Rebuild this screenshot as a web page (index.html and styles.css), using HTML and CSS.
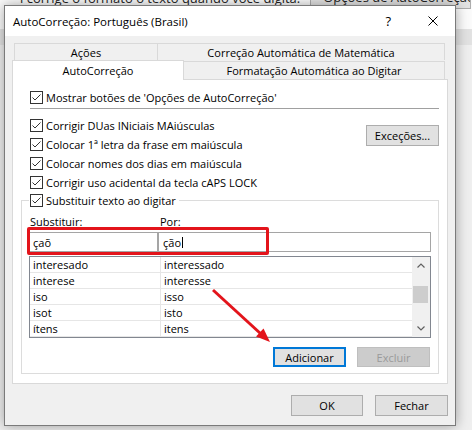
FILE: index.html
```html
<!DOCTYPE html>
<html lang="pt-BR">
<head>
    <meta charset="UTF-8">
    <meta name="viewport" content="width=device-width, initial-scale=1.0">
    <title>AutoCorreção: Português (Brasil)</title>
    <link rel="stylesheet" href="styles.css">
</head>
<body>
    <!-- window behind the dialog, only its edges show -->
    <div class="backwin">
        <span class="backwin-text">ı corrige o formato o texto quando você digita:</span>
        <span class="backwin-btn">Opções de AutoCorreção...</span>
    </div>

    <div class="dialog">
        <div class="titlebar">
            <span class="title">AutoCorreção: Português (Brasil)</span>
            <span class="help">?</span>
            <svg class="close" width="10" height="10" viewBox="0 0 10 10">
                <path d="M0.5 0.5 L9.5 9.5 M9.5 0.5 L0.5 9.5" stroke="#000" stroke-width="1" fill="none"/>
            </svg>
        </div>

        <div class="dialog-body">
            <div class="tabs">
                <div class="tab-row tab-row-back">
                    <div class="tab tab-acoes">Ações</div>
                    <div class="tab tab-math">Correção Automática de Matemática</div>
                </div>
                <div class="tab-row tab-row-front">
                    <div class="tab tab-auto">AutoCorreção</div>
                    <div class="tab tab-format">Formatação Automática ao Digitar</div>
                </div>
            </div>

            <div class="panel">
                <label class="check indent">
                    <svg class="box" width="13" height="13" viewBox="0 0 13 13"><rect x="0.5" y="0.5" width="12" height="12" fill="#fff" stroke="#333"/><polyline points="2.5,6.5 5,9 10.5,3.5" fill="none" stroke="#333"/></svg>
                    Mostrar botões de 'Opções de AutoCorreção'
                </label>
                <div class="sep"></div>

                <div class="opts">
                    <div class="opts-list">
                        <label class="check">
                            <svg class="box" width="13" height="13" viewBox="0 0 13 13"><rect x="0.5" y="0.5" width="12" height="12" fill="#fff" stroke="#333"/><polyline points="2.5,6.5 5,9 10.5,3.5" fill="none" stroke="#333"/></svg>
                            Corrigir DUas INiciais MAiúsculas
                        </label>
                        <label class="check">
                            <svg class="box" width="13" height="13" viewBox="0 0 13 13"><rect x="0.5" y="0.5" width="12" height="12" fill="#fff" stroke="#333"/><polyline points="2.5,6.5 5,9 10.5,3.5" fill="none" stroke="#333"/></svg>
                            Colocar 1ª letra da frase em maiúscula
                        </label>
                        <label class="check">
                            <svg class="box" width="13" height="13" viewBox="0 0 13 13"><rect x="0.5" y="0.5" width="12" height="12" fill="#fff" stroke="#333"/><polyline points="2.5,6.5 5,9 10.5,3.5" fill="none" stroke="#333"/></svg>
                            Colocar nomes dos dias em maiúscula
                        </label>
                        <label class="check">
                            <svg class="box" width="13" height="13" viewBox="0 0 13 13"><rect x="0.5" y="0.5" width="12" height="12" fill="#fff" stroke="#333"/><polyline points="2.5,6.5 5,9 10.5,3.5" fill="none" stroke="#333"/></svg>
                            Corrigir uso acidental da tecla cAPS LOCK
                        </label>
                    </div>
                    <button class="btn btn-exc">Exceções...</button>
                </div>

                <fieldset class="group">
                    <legend class="group-title">
                        <label class="check">
                            <svg class="box" width="13" height="13" viewBox="0 0 13 13"><rect x="0.5" y="0.5" width="12" height="12" fill="#fff" stroke="#333"/><polyline points="2.5,6.5 5,9 10.5,3.5" fill="none" stroke="#333"/></svg>
                            Substituir texto ao digitar
                        </label>
                    </legend>

                    <div class="field-labels">
                        <span class="lbl-from">Substituir:</span>
                        <span class="lbl-to">Por:</span>
                    </div>
                    <div class="inputs">
                        <div class="input input-from">çaõ</div>
                        <div class="input input-to">ção<span class="caret"></span></div>
                    </div>

                    <div class="list">
                        <div class="list-rows">
                            <div class="list-row"><span class="cell-from">interesado</span><span class="cell-to">interessado</span></div>
                            <div class="list-row"><span class="cell-from">interese</span><span class="cell-to">interesse</span></div>
                            <div class="list-row"><span class="cell-from">iso</span><span class="cell-to">isso</span></div>
                            <div class="list-row"><span class="cell-from">isot</span><span class="cell-to">isto</span></div>
                            <div class="list-row"><span class="cell-from">ítens</span><span class="cell-to">itens</span></div>
                        </div>
                        <div class="scrollbar">
                            <div class="sb-btn">
                                <svg width="8" height="5" viewBox="0 0 8 5"><polyline points="0.5,4.5 4,1 7.5,4.5" fill="none" stroke="#606060" stroke-width="1.2"/></svg>
                            </div>
                            <div class="sb-track"><div class="sb-thumb"></div></div>
                            <div class="sb-btn">
                                <svg width="8" height="5" viewBox="0 0 8 5"><polyline points="0.5,0.5 4,4 7.5,0.5" fill="none" stroke="#606060" stroke-width="1.2"/></svg>
                            </div>
                        </div>
                    </div>

                    <div class="group-buttons">
                        <button class="btn btn-default">Adicionar</button>
                        <button class="btn btn-disabled">Excluir</button>
                    </div>
                </fieldset>
            </div>

            <div class="footer">
                <button class="btn btn-ok">OK</button>
                <button class="btn btn-close">Fechar</button>
            </div>
        </div>
    </div>

    <!-- red markup drawn over the dialog -->
    <div class="mark-box"></div>
    <svg class="mark-arrow" width="72" height="66" viewBox="0 0 72 66">
        <line x1="8" y1="7" x2="56" y2="51" stroke="#e3141b" stroke-width="3"/>
        <polygon points="65,59 51,53.5 58.5,45.5" fill="#e3141b"/>
    </svg>
</body>
</html>
```

FILE: styles.css
```css
* {
    box-sizing: border-box;
}
body {
    position: relative;
    width: 472px;
    height: 430px;
    margin: 0;
    overflow: hidden;
    font-family: "Open Sans", "Noto Sans", sans-serif;
    font-size: 11px;
    color: #000;
    background-color: #efefef;
}

/* window underneath */
.backwin {
    display: flex;
    height: 45px;
    padding-left: 20px;
    background-color: #fbfbfb;
    border-bottom: 16px solid #e2e2e2;
    white-space: nowrap;
}
.backwin-text {
    margin-top: -10px;
    font-size: 13px;
    line-height: 16px;
    color: #222;
}
.backwin-btn {
    flex: none;
    margin: -12px 0 0 10px;
    width: 161px;
    height: 21px;
    padding-left: 12px;
    overflow: hidden;
    font-size: 13px;
    line-height: 16px;
    color: #222;
    background-color: #e3e3e3;
    border: 1px solid #adadad;
}

/* dialog window */
.dialog {
    position: absolute;
    left: 4px;
    top: 5px;
    width: 452px;
    border: 1px solid #7a7a7a;
    background-color: #f0f0f0;
    box-shadow: 0 0 12px rgba(0, 0, 0, 0.35);
}
.titlebar {
    display: flex;
    align-items: center;
    height: 30px;
    padding-left: 8px;
    background-color: #fff;
}
.title {
    flex: 1;
    font-size: 11.5px;
}
.help {
    margin-right: 37px;
    font-size: 13px;
}
.close {
    margin-right: 17px;
}
.dialog-body {
    padding: 7px 7px 9px 7px;
}

/* tabs */
.tab-row {
    display: flex;
}
.tab {
    display: flex;
    align-items: center;
    justify-content: center;
    border: 1px solid #d9d9d9;
    border-bottom: none;
    background-color: #f0f0f0;
}
.tab + .tab {
    margin-left: -1px;
}
.tab-row-back {
    height: 17px;
    margin-left: 2px;
}
.tab-acoes {
    width: 144px;
}
.tab-math {
    width: 288px;
}
.tab-row-front {
    height: 19px;
    align-items: flex-end;
}
.tab-auto {
    position: relative;
    z-index: 1;
    width: 172px;
    height: 20px;
    margin-bottom: -1px;
    background-color: #fff;
}
.tab-format {
    width: 262px;
    height: 18px;
}

/* tab page */
.panel {
    padding: 8px 8px 9px 8px;
    border: 1px solid #d9d9d9;
    background-color: #fff;
}
.check {
    display: flex;
    align-items: center;
    gap: 3px;
    height: 19px;
    white-space: nowrap;
}
.indent {
    margin-left: 9px;
}
.sep {
    height: 1px;
    margin: 1px 0 7px 9px;
    background-color: #a0a0a0;
}
.opts {
    display: flex;
    justify-content: space-between;
    align-items: flex-start;
}
.opts-list {
    margin-left: 9px;
}

.btn {
    height: 21px;
    padding: 0;
    font-family: inherit;
    font-size: 11px;
    color: #000;
    background-color: #e1e1e1;
    border: 1px solid #adadad;
}
.btn-exc {
    width: 73px;
    margin-top: 9px;
}

/* replace group */
.group {
    min-width: 0;
    margin: -1px 0 0 0;
    padding: 0 7px 6px 7px;
    border: 1px solid #dcdcdc;
}
.group-title {
    padding: 0 3px 0 1px;
}
.field-labels {
    display: flex;
    height: 16px;
    margin-top: 4px;
    line-height: 16px;
}
.lbl-from {
    width: 131px;
    padding-left: 1px;
}
.inputs {
    display: flex;
    height: 20px;
    margin-top: 2px;
}
.input {
    display: flex;
    align-items: center;
    border: 1px solid #a5a5a5;
    background-color: #fff;
}
.input-from {
    width: 129px;
    padding-left: 3px;
}
.input-to {
    flex: 1;
    padding-left: 4px;
}
.caret {
    width: 1px;
    height: 11px;
    margin-left: 1px;
    background-color: #000;
}

.list {
    display: flex;
    height: 82px;
    margin-top: 4px;
    border: 1px solid #828790;
    background-color: #fff;
}
.list-rows {
    flex: 1;
}
.list-row {
    display: flex;
    height: 16px;
    border-bottom: 1px solid #e6e6e6;
    line-height: 15px;
}
.cell-from {
    width: 131px;
    padding-left: 3px;
    border-right: 1px solid #e6e6e6;
}
.cell-to {
    padding-left: 3px;
}
.scrollbar {
    display: flex;
    flex-direction: column;
    width: 18px;
    background-color: #f0f0f0;
}
.sb-btn {
    display: flex;
    align-items: center;
    justify-content: center;
    height: 17px;
}
.sb-track {
    flex: 1;
}
.sb-thumb {
    width: 15px;
    height: 17px;
    margin: 12px 0 0 1px;
    background-color: #cdcdcd;
}

.group-buttons {
    display: flex;
    justify-content: flex-end;
    gap: 11px;
    margin: 9px 1px 0 0;
}
.group-buttons .btn {
    width: 73px;
    height: 20px;
}
.btn-default {
    border: 2px solid #0078d7;
}
.btn-disabled {
    color: #9a9a9a;
    background-color: #cccccc;
    border-color: #bfbfbf;
}

.footer {
    display: flex;
    justify-content: flex-end;
    gap: 12px;
    margin-top: 11px;
}
.btn-ok {
    width: 72px;
}
.btn-close {
    width: 73px;
}

/* red highlight and arrow */
.mark-box {
    position: absolute;
    left: 27px;
    top: 227px;
    width: 242px;
    height: 28px;
    border: 3px solid #e3141b;
    border-radius: 2px;
}
.mark-arrow {
    position: absolute;
    left: 205px;
    top: 283px;
}
```
